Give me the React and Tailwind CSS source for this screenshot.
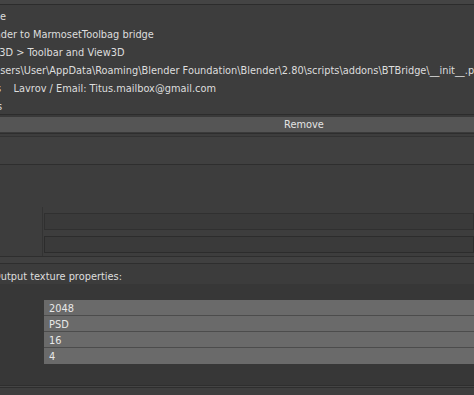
import React from "react";

function Row({ children, shift = 0 }) {
  return (
    <div className="h-[18px] leading-[18px] overflow-hidden whitespace-pre">
      <span className="inline-block" style={{ marginLeft: shift }}>{children}</span>
    </div>
  );
}

function Field({ children, last }) {
  return (
    <div className={"h-[16px] leading-[17px] bg-[#6a6a6a] pl-[5px] text-[#e8e8e8] " + (last ? "" : "border-b border-[#4c4c4c]")}>
      {children}
    </div>
  );
}

export default function App() {
  return (
    <div className="w-[474px] h-[395px] overflow-hidden bg-[#3d3d3d] font-['DejaVu_Sans',sans-serif] text-[9.8px] text-[#dedede]">
      <div className="h-[4px] bg-[#444444]" />
      <div className="h-[1px] bg-[#2c2c2c]" />
      <div className="h-[1px]" />
      <div className="h-[108px] pt-[2px] overflow-hidden">
        <Row>e</Row>
        <Row shift={-21}>Blender to MarmosetToolbag bridge</Row>
        <Row shift={-24}>View3D &gt; Toolbar and View3D</Row>
        <Row shift={-7}>{"Users\\User\\AppData\\Roaming\\Blender Foundation\\Blender\\2.80\\scripts\\addons\\BTBridge\\__init__.py"}</Row>
        <Row shift={-4}>{"s    Lavrov / Email: Titus.mailbox@gmail.com"}</Row>
        <Row shift={-3}>s</Row>
      </div>
      <div className="h-[1px] bg-[#2c2c2c]" />
      <div className="h-[2px] bg-[#393939]" />
      <div className="h-[15px] leading-[15px] bg-[#555555] text-[#e4e4e4] flex justify-center pl-[134px]">
        Remove
      </div>
      <div className="h-[1px] bg-[#3a3a3a]" />
      <div className="h-[1px] bg-[#2e2e2e]" />
      <div className="h-[2px] bg-[#3d3d3d]" />
      <div className="h-[1px] bg-[#333333]" />
      <div className="h-[27px] bg-[#404040]" />
      <div className="h-[1px] bg-[#2e2e2e]" />
      <div className="h-[91px] pt-[42px] flex">
        <div className="w-[42px]" />
        <div className="flex-1 border-l border-[#333333] pl-[1px] pt-[6px] flex flex-col gap-[6px]">
          <div className="h-[17px] bg-[#3a3a3a] border border-[#303030]" />
          <div className="h-[17px] bg-[#3a3a3a] border border-[#2c2c2c]" />
        </div>
      </div>
      <div className="h-[1px] bg-[#2e2e2e]" />
      <div className="h-[6px] bg-[#404040]" />
      <div className="h-[1px] bg-[#2e2e2e]" />
      <div className="h-[20px] leading-[25px] bg-[#3c3c3c] overflow-hidden whitespace-pre">
        <span className="inline-block ml-[-7px]">Output texture properties:</span>
      </div>
      <div className="h-[16px] bg-[#373737]" />
      <div className="flex bg-[#373737]">
        <div className="w-[44px]" />
        <div className="flex-1">
          <Field>2048</Field>
          <Field>PSD</Field>
          <Field>16</Field>
          <Field last>4</Field>
        </div>
      </div>
      <div className="h-[21px] bg-[#373737]" />
      <div className="h-[1px] bg-[#2e2e2e]" />
      <div className="h-[1px] bg-[#444444]" />
      <div className="h-[1px] bg-[#2e2e2e]" />
      <div className="h-[10px] bg-[#3e3e3e]" />
    </div>
  );
}
